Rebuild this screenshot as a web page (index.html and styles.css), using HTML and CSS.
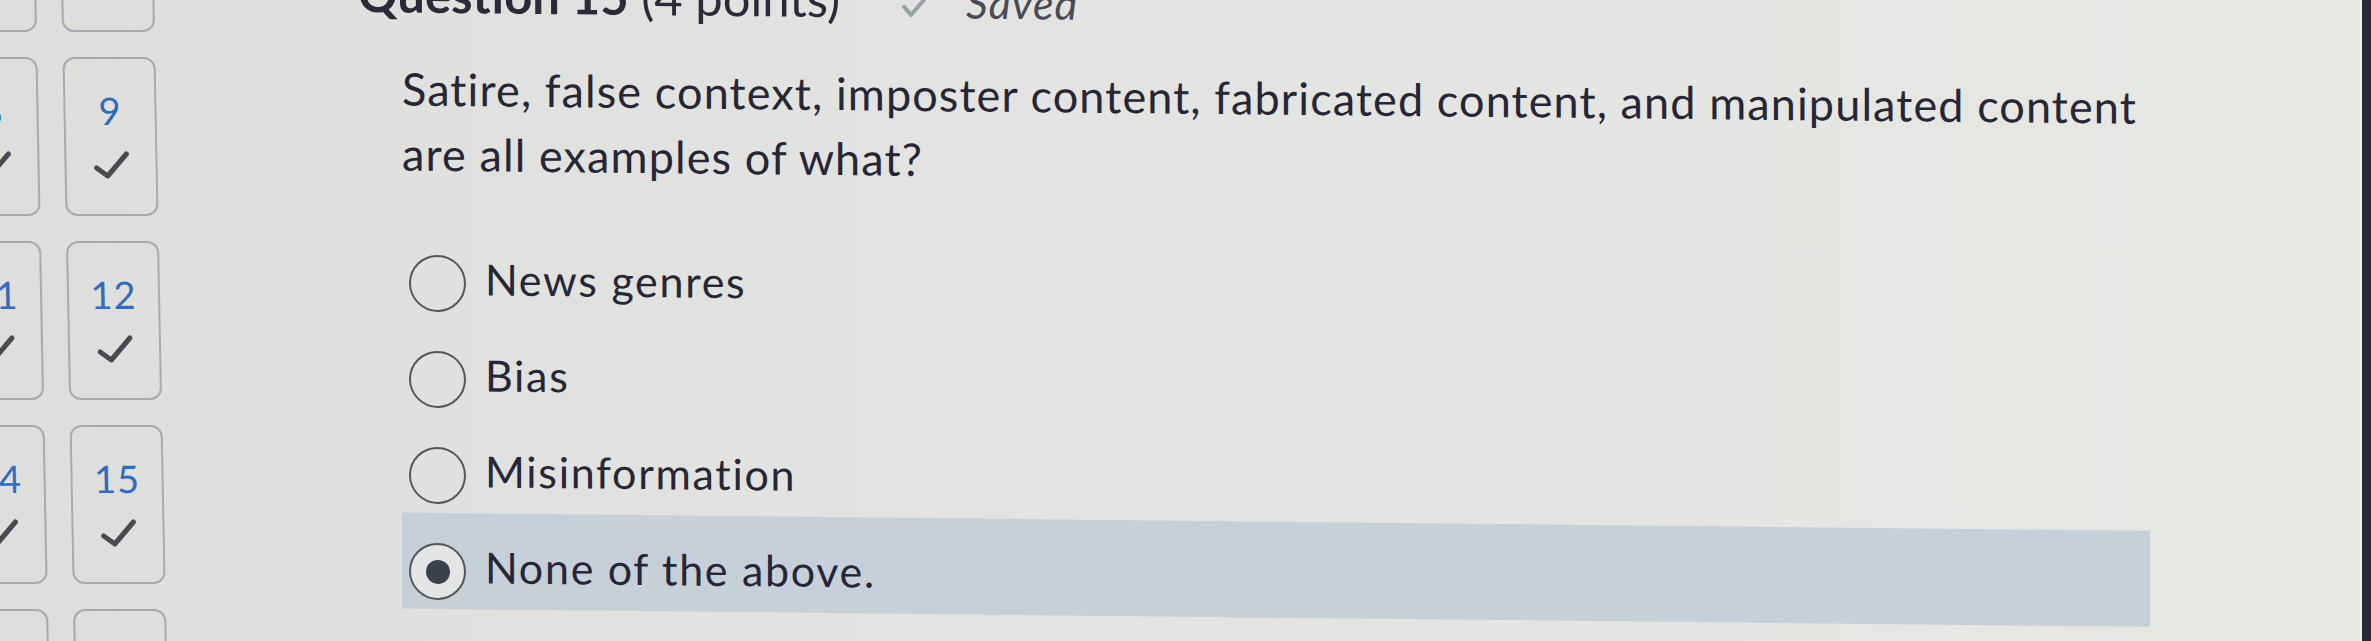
FILE: index.html
```html
<!DOCTYPE html>
<html lang="en">
<head>
<meta charset="utf-8">
<title>Quiz question 15</title>
<link rel="stylesheet" href="styles.css">
</head>
<body>
<div class="page">
  <nav class="qnav">
    <div class="qbox"><span class="qnum">4</span><svg class="qcheck" viewBox="0 0 36 28"><path d="M3 17 L14 25 L33 3"/></svg></div>
    <div class="qbox"><span class="qnum">5</span><svg class="qcheck" viewBox="0 0 36 28"><path d="M3 17 L14 25 L33 3"/></svg></div>
    <div class="qbox"><span class="qnum">6</span><svg class="qcheck" viewBox="0 0 36 28"><path d="M3 17 L14 25 L33 3"/></svg></div>
    <div class="qbox"><span class="qnum">7</span><svg class="qcheck" viewBox="0 0 36 28"><path d="M3 17 L14 25 L33 3"/></svg></div>
    <div class="qbox"><span class="qnum">8</span><svg class="qcheck" viewBox="0 0 36 28"><path d="M3 17 L14 25 L33 3"/></svg></div>
    <div class="qbox"><span class="qnum">9</span><svg class="qcheck" viewBox="0 0 36 28"><path d="M3 17 L14 25 L33 3"/></svg></div>
    <div class="qbox"><span class="qnum">10</span><svg class="qcheck" viewBox="0 0 36 28"><path d="M3 17 L14 25 L33 3"/></svg></div>
    <div class="qbox"><span class="qnum">11</span><svg class="qcheck" viewBox="0 0 36 28"><path d="M3 17 L14 25 L33 3"/></svg></div>
    <div class="qbox"><span class="qnum">12</span><svg class="qcheck" viewBox="0 0 36 28"><path d="M3 17 L14 25 L33 3"/></svg></div>
    <div class="qbox"><span class="qnum">13</span><svg class="qcheck" viewBox="0 0 36 28"><path d="M3 17 L14 25 L33 3"/></svg></div>
    <div class="qbox"><span class="qnum">14</span><svg class="qcheck" viewBox="0 0 36 28"><path d="M3 17 L14 25 L33 3"/></svg></div>
    <div class="qbox"><span class="qnum">15</span><svg class="qcheck" viewBox="0 0 36 28"><path d="M3 17 L14 25 L33 3"/></svg></div>
    <div class="qbox"><span class="qnum">16</span></div>
    <div class="qbox"><span class="qnum">17</span></div>
    <div class="qbox"><span class="qnum">18</span></div>
  </nav>
  <main class="question">
    <header class="qhead">
      <h2 class="qtitle"><strong>Question 15</strong> (4 points)</h2>
      <span class="saved"><svg class="saved-check" viewBox="0 0 24 20"><path d="M2 9 L9 17 L22 2"/></svg><em>Saved</em></span>
    </header>
    <p class="qtext">Satire, false context, imposter content, fabricated content, and manipulated content are all examples of what?</p>
    <ul class="answers">
      <li class="answer"><span class="radio"></span><span class="alabel">News genres</span></li>
      <li class="answer"><span class="radio"></span><span class="alabel">Bias</span></li>
      <li class="answer"><span class="radio"></span><span class="alabel">Misinformation</span></li>
      <li class="answer selected"><span class="radio"><span class="dot"></span></span><span class="alabel">None of the above.</span></li>
    </ul>
  </main>
  <div class="bezel"></div>
</div>
</body>
</html>
```

FILE: styles.css
```css
html, body {
  margin: 0;
  padding: 0;
  height: 100%;
  overflow: hidden;
}
body {
  background: linear-gradient(90deg, #dedfdc 0%, #e3e4e1 40%, #e7e7e4 100%);
  font-family: Lato, "Open Sans", "Liberation Sans", sans-serif;
  color: #262637;
}
.page {
  display: flex;
  align-items: flex-start;
  height: 641px;
}
.qnav {
  flex: none;
  display: grid;
  grid-template-columns: repeat(3, 93px);
  grid-auto-rows: 159px;
  gap: 25px;
  margin-left: -170px;
  margin-top: -127px;
  transform: skewX(1.1deg);
  transform-origin: 0 367px;
}
.qbox {
  box-sizing: border-box;
  border: 2px solid #a9aab0;
  border-radius: 12px;
  display: flex;
  flex-direction: column;
  align-items: center;
  padding-top: 30px;
}
.qnum {
  font-size: 38px;
  line-height: 42px;
  letter-spacing: 1px;
  color: #2f6cc2;
}
.qcheck {
  width: 36px;
  height: 28px;
  margin-top: 20px;
  fill: none;
  stroke: #4a4b50;
  stroke-width: 5;
  stroke-linecap: round;
  stroke-linejoin: round;
}
.question {
  flex: 1;
  padding-left: 243px;
  transform: skewY(0.6deg);
  transform-origin: 0 0;
}
.qhead {
  display: flex;
  align-items: baseline;
  margin: -38px 0 0 -44px;
  height: 58px;
}
.qtitle {
  margin: 0;
  font-size: 49px;
  line-height: 58px;
  font-weight: 400;
  color: #2b2a38;
}
.qtitle strong {
  font-weight: 700;
}
.saved {
  display: flex;
  align-items: baseline;
  margin-left: 62px;
  font-size: 43px;
  line-height: 58px;
  letter-spacing: 1px;
  color: #4a4a55;
}
.saved-check {
  width: 24px;
  height: 20px;
  margin-right: 40px;
  fill: none;
  stroke: #9aa0a5;
  stroke-width: 4;
  stroke-linecap: round;
  stroke-linejoin: round;
}
.qtext {
  margin: 34px 0 0 0;
  width: 1770px;
  font-size: 45px;
  line-height: 65px;
  letter-spacing: 1.1px;
}
.answers {
  list-style: none;
  margin: 38px 0 0 0;
  padding: 0;
  width: 1748px;
}
.answer {
  box-sizing: border-box;
  height: 96px;
  display: flex;
  align-items: flex-start;
  padding: 30px 0 0 7px;
}
.answer.selected {
  background: #c6d0d9;
}
.radio {
  box-sizing: border-box;
  flex: none;
  width: 57px;
  height: 57px;
  border: 2px solid #55565c;
  border-radius: 50%;
  display: flex;
  align-items: center;
  justify-content: center;
}
.selected .radio {
  background: #e4e6e6;
}
.dot {
  width: 24px;
  height: 24px;
  border-radius: 50%;
  background: #3b4148;
}
.alabel {
  margin-left: 19px;
  font-size: 43px;
  line-height: 48px;
  letter-spacing: 1.7px;
}
.bezel {
  flex: none;
  align-self: stretch;
  width: 9px;
  border-left: 2px solid #f2f2f2;
  background: #262c3a;
}
```
